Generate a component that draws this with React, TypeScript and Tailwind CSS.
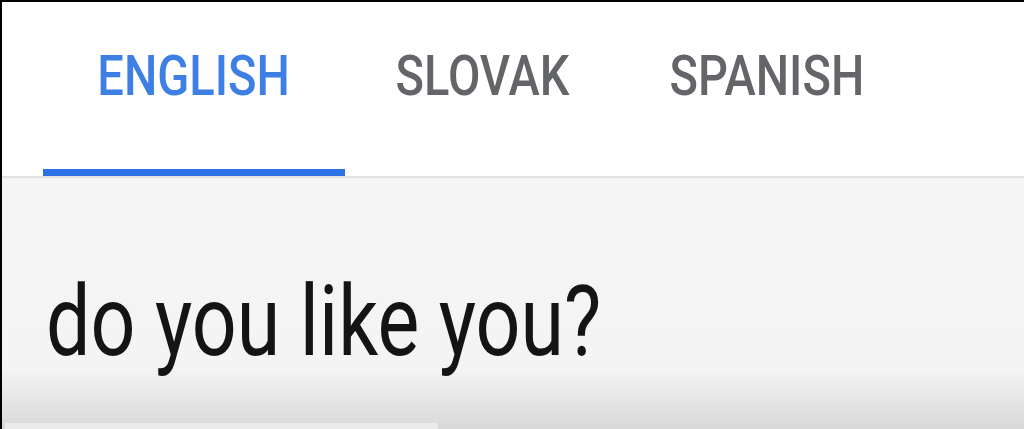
import React from 'react';

const tabs = [
  { label: 'ENGLISH', width: 'w-[302px]', active: true },
  { label: 'SLOVAK', width: 'w-[275px]', active: false },
  { label: 'SPANISH', width: 'w-[294px]', active: false },
];

const roboto = { fontFamily: 'Roboto, "Noto Sans", sans-serif' };

export default function App() {
  return (
    <div className="w-[1024px] h-[429px] bg-black pt-[2px] pl-[2px] overflow-hidden" style={roboto}>
      <div className="flex flex-col h-full bg-white">
        {/* Tabs */}
        <div className="h-[174px] flex pl-[41px] border-b-2 border-[#e2e2e2] box-content">
          {tabs.map((tab) => (
            <div key={tab.label} className={`${tab.width} h-full flex flex-col items-center`}>
              <span
                className={`mt-[46px] text-[56px] leading-none font-medium scale-x-[0.84] ${
                  tab.active ? 'text-[#3d7fe2]' : 'text-[#636569]'
                }`}
              >
                {tab.label}
              </span>
              <div className={`mt-auto h-[7px] w-full ${tab.active ? 'bg-[#2c72e4]' : ''}`} />
            </div>
          ))}
        </div>

        {/* Input area */}
        <div className="flex-1 bg-[linear-gradient(to_bottom,#f5f5f5_0%,#f4f4f4_78%,#dbdbdb_100%)] pl-[44px] pt-[95px]">
          <p className="text-[98px] leading-none text-[#141414] scale-x-[0.805] origin-left whitespace-nowrap">
            do you like you?
          </p>
        </div>
        <div className="h-[6px] flex bg-[#d9d9d9]">
          <div className="ml-[3px] w-[433px] bg-[#ebebeb]" />
        </div>
      </div>
    </div>
  );
}
